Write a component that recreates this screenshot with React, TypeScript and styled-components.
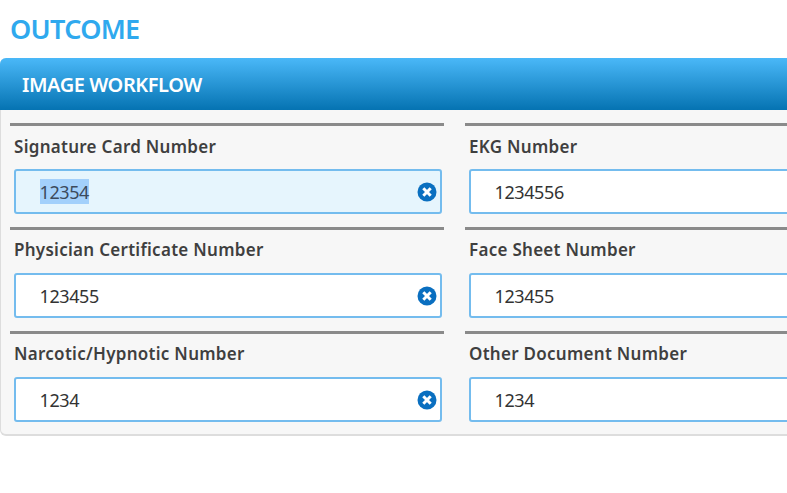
import React from 'react';
import styled, { createGlobalStyle } from 'styled-components';

const GlobalStyle = createGlobalStyle`
  html, body {
    margin: 0;
    padding: 0;
    background: #ffffff;
    overflow: hidden;
  }
  body {
    font-family: 'Noto Sans', 'Liberation Sans', sans-serif;
  }
`;

const Page = styled.div`
  width: 787px;
  height: 493px;
  overflow: hidden;
`;

const Title = styled.h1`
  margin: 0;
  padding: 10px 0 0 10px;
  height: 58px;
  box-sizing: border-box;
  font-size: 27px;
  line-height: 37px;
  font-weight: 600;
  letter-spacing: -0.7px;
  color: #2fa9ee;
`;

const Panel = styled.section`
  width: 900px;
  height: 378px;
  box-sizing: border-box;
  background: #f7f7f7;
  border-radius: 6px;
  border-left: 1px solid #dddddd;
  border-bottom: 2px solid #dddddd;
`;

const PanelHeader = styled.header`
  height: 52px;
  margin-left: -1px;
  box-sizing: border-box;
  padding-left: 22px;
  display: flex;
  align-items: center;
  border-radius: 6px 0 0 0;
  background: linear-gradient(to bottom, #4ab8f8, #0573b2);
  color: #ffffff;
  font-size: 20px;
  font-weight: 600;
  letter-spacing: -0.45px;
`;

const FieldGrid = styled.div`
  display: grid;
  grid-template-columns: 434px 434px;
  column-gap: 21px;
  padding: 13px 0 0 9px;
`;

const Field = styled.div<{ $first?: boolean }>`
  height: 104px;
  box-sizing: border-box;
  border-top: 3px solid #8a8a8a;
  padding: 0 2px 0 4px;
`;

const FieldLabel = styled.label<{ $first?: boolean }>`
  display: block;
  height: 43px;
  padding-top: ${({ $first }) => ($first ? '8px' : '7px')};
  box-sizing: border-box;
  font-size: 17px;
  line-height: 26px;
  font-weight: 600;
  letter-spacing: 0.28px;
  color: #3f3f3f;
`;

const InputBox = styled.div<{ $active?: boolean }>`
  height: 45px;
  box-sizing: border-box;
  padding: 0 12px 0 23.5px;
  display: flex;
  align-items: center;
  justify-content: space-between;
  border: 2px solid #74bcee;
  border-radius: 3px;
  background: ${({ $active }) => ($active ? '#e6f5fd' : '#ffffff')};
`;

const InputValue = styled.span<{ $selected?: boolean }>`
  padding-top: 2px;
  font-size: 18px;
  line-height: 23px;
  letter-spacing: -0.4px;
  color: ${({ $selected }) => ($selected ? '#3c4a5c' : '#333333')};
  background: ${({ $selected }) => ($selected ? '#a3d0fb' : 'transparent')};
`;

const ClearButton = styled.span`
  display: flex;
  margin-right: -9px;
`;

const ClearIcon = () => (
  <ClearButton>
    <svg width="20" height="20" viewBox="0 0 20 20">
      <circle cx="10" cy="10" r="9.5" fill="#0a6fc0" />
      <path d="M6.3 6.3l7.4 7.4M13.7 6.3l-7.4 7.4" stroke="#ffffff" strokeWidth="3" />
    </svg>
  </ClearButton>
);

const fields = [
  { label: 'Signature Card Number', value: '12354', selected: true, clear: true },
  { label: 'EKG Number', value: '1234556' },
  { label: 'Physician Certificate Number', value: '123455', clear: true },
  { label: 'Face Sheet Number', value: '123455' },
  { label: 'Narcotic/Hypnotic Number', value: '1234', clear: true },
  { label: 'Other Document Number', value: '1234' },
];

export default function App() {
  return (
    <Page>
      <GlobalStyle />
      <Title>OUTCOME</Title>
      <Panel>
        <PanelHeader>IMAGE WORKFLOW</PanelHeader>
        <FieldGrid>
          {fields.map((f, i) => (
            <Field key={f.label}>
              <FieldLabel $first={i < 2}>{f.label}</FieldLabel>
              <InputBox $active={f.selected}>
                <InputValue $selected={f.selected}>{f.value}</InputValue>
                {f.clear && <ClearIcon />}
              </InputBox>
            </Field>
          ))}
        </FieldGrid>
      </Panel>
    </Page>
  );
}
